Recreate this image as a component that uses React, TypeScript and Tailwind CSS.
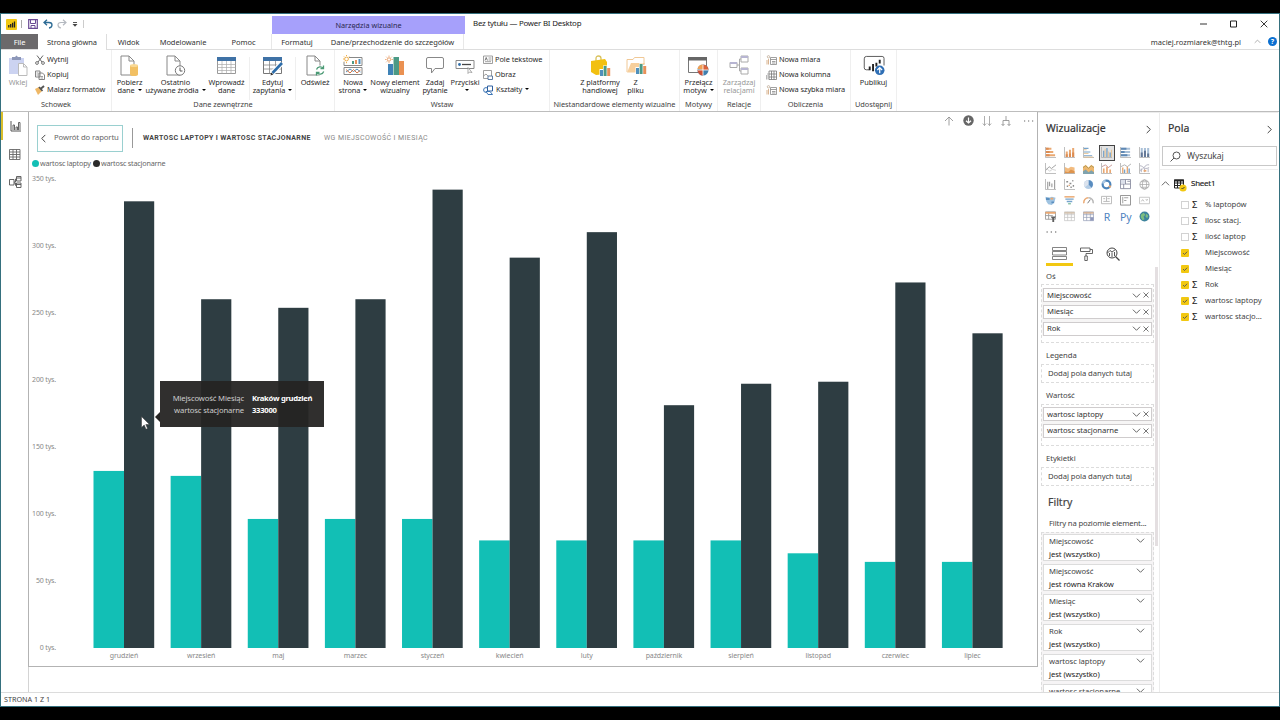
import type { ReactNode } from "react";
import clsx from "clsx";

const TEAL = "#12bfb5";
const DARK = "#2e3d42";

const months = [
  { name: "grudzień", laptops: 132, desktops: 333 },
  { name: "wrzesień", laptops: 128.3, desktops: 260 },
  { name: "maj", laptops: 96.2, desktops: 253.6 },
  { name: "marzec", laptops: 96.2, desktops: 260 },
  { name: "styczeń", laptops: 96.2, desktops: 341.7 },
  { name: "kwiecień", laptops: 80.2, desktops: 291 },
  { name: "luty", laptops: 80.2, desktops: 310 },
  { name: "październik", laptops: 80.2, desktops: 181 },
  { name: "sierpień", laptops: 80.2, desktops: 197 },
  { name: "listopad", laptops: 70.6, desktops: 198.5 },
  { name: "czerwiec", laptops: 64.2, desktops: 272.5 },
  { name: "lipiec", laptops: 64.2, desktops: 234.6 },
];

function Icon({ w = 12, h = w, box, children }: { w?: number; h?: number; box?: string; children: ReactNode }) {
  return (
    <svg width={w} height={h} viewBox={box ?? `0 0 ${w} ${h}`} fill="none" className="block shrink-0">
      {children}
    </svg>
  );
}

function Chevron({ dir = "down", w = 8, color = "#666" }: { dir?: "down" | "up" | "left" | "right"; w?: number; color?: string }) {
  const paths = { down: "M1 3l4 4 4-4", up: "M1 7l4-4 4 4", left: "M7 1L3 5l4 4", right: "M3 1l4 4-4 4" };
  return (
    <Icon w={w} box="0 0 10 10">
      <path d={paths[dir]} stroke={color} strokeWidth="1.1" />
    </Icon>
  );
}

function Caret() {
  return <span className="relative -top-px ml-[3px] inline-block border-x-2 border-t-2 border-x-transparent border-t-black align-middle" />;
}

/* ---------- ribbon icons ---------- */

const page = <path d="M2 1h8l5 5v14H2zM10 1v5h5" stroke="#888" fill="#fff" />;

const miniBars = (x: number, y: number) => (
  <g transform={`translate(${x} ${y})`}>
    <path d="M0 4h3v6H0z" fill="#4f8fbc" />
    <path d="M3.6 0h3v10h-3z" fill="#4b9a85" />
    <path d="M7.2 2h3v8h-3z" fill="#e8915a" />
  </g>
);

const icons = {
  paste: (
    <Icon w={20} h={21}>
      <path d="M1 3h15v16H1z" fill="#ccd3f1" />
      <path d="M4 2h3l1.500-1.500L10 2h3v3H4z" fill="#8d97b8" />
      <path d="M10.500 8.500h5l3.500 3.500v8.500h-8.500zM15.500 8.500V12H19" fill="#fff" stroke="#bbb" />
    </Icon>
  ),
  getData: (
    <Icon w={21} h={21}>
      {page}
      <path d="M11 10.500v9c0 2 8 2 8 0v-9z" fill="#f2c063" />
      <ellipse cx="15" cy="10.500" rx="4" ry="1.500" fill="#f9d893" />
    </Icon>
  ),
  recent: (
    <Icon w={21} h={21}>
      {page}
      <circle cx="15" cy="15.500" r="4.700" fill="#fff" stroke="#777" />
      <path d="M15 12.500v3.500h2.500" stroke="#555" />
    </Icon>
  ),
  enter: (
    <Icon w={20} h={21}>
      <path d="M.5 2.500h18v16H.5z" fill="#fff" stroke="#999" />
      <path d="M0 2h19v4H0z" fill="#3f72a6" />
      <path d="M5 6v12.500M9.500 6v12.500M14 6v12.500M.5 9.500h18M.5 12.500h18M.5 15.500h18" stroke="#aaa" strokeWidth=".7" />
    </Icon>
  ),
  edit: (
    <Icon w={20} h={21}>
      <path d="M.5 2.500h18v16H.5z" fill="#fff" stroke="#777" />
      <path d="M0 2h19v4H0z" fill="#3f72a6" />
      <path d="M6.500 6v12.500M12.500 6v12.500M.5 10h18M.5 14h18" stroke="#888" strokeWidth=".8" />
      <path d="M19 8L9 18.500" stroke="#fff" strokeWidth="5" />
      <path d="M19 8L9.500 18" stroke="#2e6da9" strokeWidth="2.600" />
      <path d="M7.500 20.500l.7-3 2.200 2z" fill="#333" />
    </Icon>
  ),
  refresh: (
    <Icon w={21} h={21}>
      {page}
      <circle cx="15" cy="15.500" r="5" fill="#fff" />
      <path d="M11.500 14.500c1-3 5-3.500 6.800-1M18.700 16.500c-1 3-5 3.500-6.800 1M18.500 10.500v3.200h-3M11.500 20.500v-3.200h3" stroke="#4b9a75" strokeWidth="1.300" />
    </Icon>
  ),
  newPage: (
    <Icon w={20} h={21}>
      <path d="M6 2.500h13v8H1V7M1 12.500h18v7H1z" stroke="#888" fill="#fff" />
      <circle cx="3.500" cy="4" r="1.900" stroke="#efb04b" fill="#fff" />
      <path d="M3.500 0v1M0 4h1M1 1.500l.8.8M6.200 1.500l-.8.8M3.500 7v1.200M1 6.600l.8-.8" stroke="#efb04b" />
      <path d="M9 6h2v3H9z" fill="#4b9a85" />
      <path d="M12 5h2v4h-2z" fill="#e8915a" />
      <path d="M15.500 4h2v5h-2z" fill="#4f8fbc" />
      <path d="M3 17l4-3 3.500 2.500L14 14l3.500 3" stroke="#4f8fbc" />
      <path d="M3 14.500l4 3.500 3.500-3.500L14 18l3.500-3" stroke="#d87643" />
    </Icon>
  ),
  newVisual: (
    <Icon w={20} h={21}>
      <path d="M3 9h5v11H3z" fill="#3f83b7" />
      <path d="M8.500 2H14v18H8.500z" fill="#4b9a85" />
      <path d="M14 6h5v14h-5z" fill="#ea9152" />
      <circle cx="4" cy="4.500" r="1.700" stroke="#e8a06a" />
      <path d="M4 .5v1.500M4 7v1.200M0 4.500h1.500M6.500 4.500H8M1.200 1.700l1 1M6.800 1.700l-1 1M1.200 7.300l1-1" stroke="#e8a06a" strokeWidth=".8" />
    </Icon>
  ),
  ask: (
    <Icon w={20} h={21}>
      <path d="M3 2.500h14q1.500 0 1.500 1.500v8q0 1.500-1.500 1.500h-7L6.500 18v-4.500H3Q1.500 13.500 1.500 12V4Q1.500 2.500 3 2.500z" stroke="#888" />
    </Icon>
  ),
  buttons: (
    <Icon w={20} h={21}>
      <path d="M1 5.500h18v8H1z" stroke="#888" />
      <circle cx="4.500" cy="9.500" r="1.400" fill="#2e6da9" />
      <path d="M7 9.500h9" stroke="#444" strokeWidth="1.300" />
      <path d="M13 12.500v6l1.500-1.500 2.500.5z" fill="#fff" stroke="#888" strokeWidth=".7" />
    </Icon>
  ),
  market: (
    <Icon w={22} h={21}>
      <path d="M7 6V3.500Q7 1 9.500 1T12 3.500V6" stroke="#d9c25c" strokeWidth="1.300" />
      <path d="M2 6l14-2 2 3v12l-11 1-5-3z" fill="#f2c010" />
      <path d="M10.500 14H14v-3.500h4V12h3.500V21h-11z" fill="#fff" />
      {miniBars(11, 11)}
    </Icon>
  ),
  file: (
    <Icon w={22} h={21}>
      <path d="M2 17V4.500h6l1.500-2H19V8" stroke="#f0c896" />
      <path d="M2 17.500L6 8h14l-3 9.500z" fill="#f6cf9d" />
      <path d="M10.500 12H14V8.500h4V10h3.500v9h-11z" fill="#fff" />
      {miniBars(11, 9)}
    </Icon>
  ),
  theme: (
    <Icon w={21} h={21}>
      <path d="M.5 2.500h18v15H.5z" fill="#fff" stroke="#777" />
      <path d="M0 2h19v3.500H0z" fill="#666" />
      <circle cx="15" cy="15" r="5.500" fill="#3f7fae" />
      <path d="M15 15V9.500a5.500 5.500 0 0 1 5.500 5.500z" fill="#d9633b" />
      <path d="M15 15l-5.500-1A5.500 5.500 0 0 1 15 9.500z" fill="#efa054" />
      <path d="M15 15v5.500A5.500 5.500 0 0 1 9.500 15z" fill="#cc5038" />
      <path d="M15 9.500v11M9.500 15h11" stroke="#fff" strokeWidth=".8" />
    </Icon>
  ),
  relations: (
    <Icon w={20} h={21}>
      <path d="M1 7.500h7v5H1zM12 1h7v6h-7zM12 13h7v6h-7zM8 10h2.500V4H12M10.500 10v6H12" stroke="#aaa" />
      <path d="M1 7h7v2H1zM12 1h7v2h-7zM12 13h7v2h-7z" fill="#b7b5d2" />
    </Icon>
  ),
  publish: (
    <Icon w={22} h={21} box="0 0 22 22">
      <path d="M6 15.500H3Q.8 15.500.8 13.500V4Q.8 1.500 3 1.500h16.500q2 0 2 2V11" stroke="#555" />
      <path d="M6.500 16v-4M10 17V9.500M13.500 12V8M17 9V5" stroke="#222" strokeWidth="2" />
      <circle cx="17" cy="16" r="5" fill="#2f6fb5" />
      <path d="M17 19v-5.500M14.500 15.700l2.500-2.500 2.500 2.500" stroke="#fff" strokeWidth="1.300" />
    </Icon>
  ),
  cut: (
    <Icon w={10}>
      <path d="M2 .5l5 6.500M8 .5L3 7" stroke="#666" />
      <circle cx="2" cy="8" r="1.400" stroke="#666" strokeWidth=".9" />
      <circle cx="8" cy="8" r="1.400" stroke="#666" strokeWidth=".9" />
    </Icon>
  ),
  copy: (
    <Icon w={10}>
      <path d="M.5 1h4.500v6H.5zM4 3h3.500L9.500 5v4.500H4z" fill="#fff" stroke="#777" strokeWidth=".9" />
      <path d="M1.500 3h2M1.500 5h2M5.500 6.500h2.500M5.500 8h2.500" stroke="#777" strokeWidth=".7" />
    </Icon>
  ),
  brush: (
    <Icon w={10}>
      <path d="M0 4l4-2 3 4-4 4z" fill="#efb866" />
      <path d="M4 2l3.500 4" stroke="#555" strokeWidth="1.600" />
      <path d="M5.500 4L9 1" stroke="#555" strokeWidth="2" />
    </Icon>
  ),
  textBox: (
    <Icon w={10}>
      <path d="M.5 1h9v7.500h-9zM5.500 3h3M5.500 5h3M2 6.700h6" stroke="#888" strokeWidth=".8" />
      <path d="M2 5.500l1.200-3 1.200 3" stroke="#555" strokeWidth=".8" />
    </Icon>
  ),
  image: (
    <Icon w={10}>
      <path d="M.5.5h8v8h-8zM.5 6l2.500-2 2 2" stroke="#888" strokeWidth=".8" />
      <path d="M5 6h4.500v3.500H5z" fill="#fff" stroke="#4f6f9a" strokeWidth=".9" />
    </Icon>
  ),
  shapes: (
    <Icon w={11} h={10}>
      <circle cx="3" cy="5" r="2.400" stroke="#3e76b5" />
      <path d="M4.500 1h5v5h-5z" fill="#fff" stroke="#2e5f9f" />
      <path d="M3 6.500h4l2.500 3H5z" fill="#fff" stroke="#3e76b5" />
    </Icon>
  ),
  measure: (
    <Icon w={11} h={10}>
      <path d="M1 5v4.500M2.500 4v5.500" stroke="#d5ab84" strokeWidth=".9" />
      <path d="M4.500 2.500h6v7h-6zM4.500 4.500h6M6 6.500h3.500M6 8h3.500" stroke="#888" strokeWidth=".8" />
      <circle cx="2.500" cy="1.800" r="1.200" stroke="#b9a48c" strokeWidth=".7" />
    </Icon>
  ),
  column: (
    <Icon w={11} h={10}>
      <path d="M3 1h7.500v8.500H3zM5.500 1v8.500M8 1v8.500M3 4h7.500M3 7h7.500" stroke="#777" strokeWidth=".8" />
      <path d="M.5 5v4.500M2 3v6.500" stroke="#999" strokeWidth=".7" />
    </Icon>
  ),
};

/* ---------- ribbon ---------- */

function BigButton({ icon, lines, width, caret, muted }: { icon: ReactNode; lines: string[]; width: string; caret?: boolean; muted?: boolean }) {
  return (
    <div className={clsx("flex shrink-0 flex-col items-center text-center leading-[8px] whitespace-nowrap", width, muted ? "text-[#999]" : "text-[#2b2b2b]")}>
      <div className="mb-[2px] h-[21px]">{icon}</div>
      {lines.map((line, i) => (
        <div key={i} className="h-2">
          {line}
          {caret && i === lines.length - 1 && <Caret />}
        </div>
      ))}
    </div>
  );
}

function SmallButton({ icon, label, caret }: { icon: ReactNode; label: string; caret?: boolean }) {
  return (
    <div className="flex h-[15px] items-center gap-[2px] whitespace-nowrap">
      {icon}
      <span>
        {label}
        {caret && <Caret />}
      </span>
    </div>
  );
}

function Group({ label, width, children }: { label: string; width: string; children: ReactNode }) {
  return (
    <div className={clsx("flex h-[61px] shrink-0 flex-col border-r border-[#efefef]", width)}>
      <div className="flex h-[49px] pt-[5px]">{children}</div>
      <div className="flex justify-center leading-[11px] whitespace-nowrap text-[#444]">{label}</div>
    </div>
  );
}

function Ribbon() {
  return (
    <div className="flex h-[62px] border-b border-[#bdbdbd] text-[7.4px] tracking-[-0.06px] text-[#2b2b2b]">
      <Group label="Schowek" width="w-[111px]">
        <BigButton icon={icons.paste} lines={["Wklej"]} width="w-[34px]" muted />
        <div className="-mt-[3px]">
          <SmallButton icon={icons.cut} label="Wytnij" />
          <SmallButton icon={icons.copy} label="Kopiuj" />
          <SmallButton icon={icons.brush} label="Malarz formatów" />
        </div>
      </Group>
      <Group label="Dane zewnętrzne" width="w-[223px]">
        <BigButton icon={icons.getData} lines={["Pobierz", "dane"]} width="w-[35px]" caret />
        <BigButton icon={icons.recent} lines={["Ostatnio", "używane źródła"]} width="w-[57px]" caret />
        <BigButton icon={icons.enter} lines={["Wprowadź", "dane"]} width="w-[45px]" />
        <div className="mt-[2px] -mb-px border-x border-[#efefef]">
          <div className="-mt-[2px]">
            <BigButton icon={icons.edit} lines={["Edytuj", "zapytania"]} width="w-[45px]" caret />
          </div>
        </div>
        <BigButton icon={icons.refresh} lines={["Odśwież"]} width="w-[38px]" />
      </Group>
      <Group label="Wstaw" width="w-[215px]">
        <BigButton icon={icons.newPage} lines={["Nowa", "strona"]} width="w-[36px]" caret />
        <BigButton icon={icons.newVisual} lines={["Nowy element", "wizualny"]} width="w-[48px]" />
        <BigButton icon={icons.ask} lines={["Zadaj", "pytanie"]} width="w-[32px]" />
        <BigButton icon={icons.buttons} lines={["Przyciski", ""]} width="w-[28px]" caret />
        <div className="-mt-[3px] ml-1">
          <SmallButton icon={icons.textBox} label="Pole tekstowe" />
          <SmallButton icon={icons.image} label="Obraz" />
          <SmallButton icon={icons.shapes} label="Kształty" caret />
        </div>
      </Group>
      <Group label="Niestandardowe elementy wizualne" width="w-[130px]">
        <div className="ml-[26px] flex">
          <BigButton icon={icons.market} lines={["Z platformy", "handlowej"]} width="w-[48px]" />
          <BigButton icon={icons.file} lines={["Z", "pliku"]} width="w-[23px]" />
        </div>
      </Group>
      <Group label="Motywy" width="w-[38px]">
        <BigButton icon={icons.theme} lines={["Przełącz", "motyw"]} width="w-[37px]" caret />
      </Group>
      <Group label="Relacje" width="w-[43px]">
        <BigButton icon={icons.relations} lines={["Zarządzaj", "relacjami"]} width="w-[42px]" muted />
      </Group>
      <Group label="Obliczenia" width="w-[90px]">
        <div className="-mt-[3px] ml-[5px]">
          <SmallButton icon={icons.measure} label="Nowa miara" />
          <SmallButton icon={icons.column} label="Nowa kolumna" />
          <SmallButton icon={icons.measure} label="Nowa szybka miara" />
        </div>
      </Group>
      <Group label="Udostępnij" width="w-[46px]">
        <BigButton icon={icons.publish} lines={["Publikuj"]} width="w-[45px]" />
      </Group>
    </div>
  );
}

function TitleBar() {
  return (
    <div className="flex h-5 items-center">
      <div className="flex w-[271px] items-center pl-[5px]">
        <Icon w={11}>
          <rect width="11" height="11" rx="1" fill="#f2c811" />
          <path d="M2.800 8.500V6M4.700 8.500V5M6.600 8.500V3.700M8.500 8.500V2.500" stroke="#222" strokeWidth="1.300" />
        </Icon>
        <div className="ml-1 h-2 w-px bg-[#aaa]" />
        <div className="ml-[6px]">
          <Icon w={10}>
            <path d="M.7.700h8.600v8.600H.7z" stroke="#6a4a94" strokeWidth="1.200" />
            <path d="M2.500 1v3.500h5V1M3 9V6.500h4V9" stroke="#6a4a94" />
          </Icon>
        </div>
        <div className="ml-[5px]">
          <Icon w={10}>
            <path d="M4 .8L1 3.500l3 2.700M1 3.500h5q3 0 3 2.500T6 9" stroke="#2b6a94" strokeWidth="1.300" />
          </Icon>
        </div>
        <div className="ml-1">
          <Icon w={10}>
            <path d="M6 .8l3 2.700-3 2.700M9 3.500H4q-3 0-3 2.500T4 9" stroke="#b4b9c0" strokeWidth="1.200" />
          </Icon>
        </div>
        <div className="ml-[5px]">
          <Icon w={6} h={6}>
            <path d="M1 1.500h4" stroke="#555" />
            <path d="M.5 3h5L3 5.800z" fill="#444" />
          </Icon>
        </div>
        <div className="ml-[5px] h-2 w-px bg-[#ccc]" />
      </div>
      <div className="mt-[2px] flex h-[18px] w-[193px] items-center justify-center bg-[#a6a0fb] text-[7.300px] text-[#2b2850]">Narzędzia wizualne</div>
      <div className="ml-2 text-[7.900px] tracking-[-0.220px] text-[#222]">Bez tytułu — Power BI Desktop</div>
      <div className="ml-auto flex items-center gap-[23px] pr-[11px]">
        <Icon w={7} h={8}><path d="M0 4h7" stroke="#333" /></Icon>
        <Icon w={7} h={8}><path d="M.5 1h6v6h-6z" stroke="#222" /></Icon>
        <Icon w={8}><path d="M.7.700l6.600 6.600M7.300.7L.7 7.300" stroke="#222" strokeWidth=".9" /></Icon>
      </div>
    </div>
  );
}

function MenuTabs() {
  return (
    <div className="flex h-4 items-stretch border-b border-[#ddd] text-[7.500px] leading-[16px] tracking-[-0.070px] text-[#333]">
      <div className="w-[37px] bg-[#6b696b] text-center text-white">File</div>
      <div className="h-4 w-[69px] border-r border-[#ddd] bg-white text-center">Strona główna</div>
      <div className="w-[43px] text-center">Widok</div>
      <div className="w-[66px] text-center">Modelowanie</div>
      <div className="w-[55px] text-center">Pomoc</div>
      <div className="w-[51px] border-l border-[#e8e8e8] text-center">Formatuj</div>
      <div className="w-[142px] border-r border-[#e8e8e8] text-center whitespace-nowrap">Dane/przechodzenie do szczegółów</div>
      <div className="ml-auto flex items-center">
        <span className="mr-[13px] tracking-normal">maciej.rozmiarek@thtg.pl</span>
        <Chevron dir="up" w={7} color="#999" />
        <span className="mr-[2px] ml-[7px] flex size-[9px] items-center justify-center rounded-full bg-[#0b6fd0] text-[7px] leading-none font-bold text-white">?</span>
      </div>
    </div>
  );
}

/* ---------- report canvas ---------- */

function ViewRail() {
  return (
    <div className="flex w-[28px] shrink-0 flex-col border-r border-[#d4d4d4]">
      <div className="flex h-7 items-center border-l-2 border-[#d8be2c] pl-[7px]">
        <Icon w={11}>
          <path d="M1 0v10h10" stroke="#555" />
          <path d="M3 9V4h1.500v5M6 9V6h1.500v3M8.500 9V1.500H10V9" stroke="#555" strokeWidth=".9" />
        </Icon>
      </div>
      <div className="flex h-7 items-center pl-2">
        <Icon w={12} h={11}>
          <path d="M.5.5h10.500v10H.5zM.5 3h10.500M.5 5.500h10.500M.5 8h10.500M4 .5v10M7.500.5v10" stroke="#666" strokeWidth=".9" />
        </Icon>
      </div>
      <div className="flex h-7 items-center pl-2">
        <Icon w={13} h={12}>
          <path d="M.5 3.500h4.500V9H.5zM7.500.5H12V5H7.500zM7.500 7H12v4.500H7.500zM5 6h1.500V3h1M5 7h1.500v2.500h1M7.500 2H12M7.500 8.500H12" stroke="#555" strokeWidth=".9" />
        </Icon>
      </div>
    </div>
  );
}

function ColumnChart() {
  const base = 476;
  const scale = 469.5 / 350;
  return (
    <svg width="1008" height="494" viewBox="0 0 1008 494" className="block" fontSize="7" fill="#888">
      {[350, 300, 250, 200, 150, 100, 50, 0].map((v) => (
        <text key={v} x="27" y={base - v * scale + 2.3} textAnchor="end" letterSpacing="-0.15">
          {v} tys.
        </text>
      ))}
      {months.map((m, i) => {
        const x = 64.5 + i * 77.13;
        return (
          <g key={m.name}>
            <rect x={x} y={base - m.laptops * scale} width="30.500" height={m.laptops * scale} fill={TEAL} />
            <rect x={x + 30.5} y={base - m.desktops * scale} width="30.200" height={m.desktops * scale} fill={DARK} />
            <text x={x + 30.5} y="486" textAnchor="middle" letterSpacing="-0.1">
              {m.name}
            </text>
          </g>
        );
      })}
    </svg>
  );
}

function ChartTooltip() {
  return (
    <div className="absolute top-[269px] left-[131px] flex h-[46px] w-[164px] items-center gap-2 bg-[#252423]/95 text-[7.700px] leading-[12px] tracking-[-0.150px]">
      <div className="absolute top-[31px] -left-[5px] border-y-[5px] border-r-[5px] border-y-transparent border-r-[#252423]" />
      <div className="w-[84px] text-right whitespace-nowrap text-[#ccc]">
        <div>Miejscowość Miesiąc</div>
        <div>wartosc stacjonarne</div>
      </div>
      <div className="font-bold tracking-[-0.3px] whitespace-nowrap text-white">
        <div>Kraków grudzień</div>
        <div>333000</div>
      </div>
    </div>
  );
}

function ReportCanvas() {
  return (
    <div className="relative h-[556px] w-[1010px] border border-[#b3b3b3] bg-white">
      <div className="flex h-[43px] items-center pt-[9px]">
        <div className="ml-2 flex h-[27px] w-[86px] shrink-0 items-center gap-[6px] border border-[#9ad0d0] pl-px text-[7.700px] tracking-[-0.1px] whitespace-nowrap text-[#666]">
          <Chevron dir="left" w={9} color="#444" />
          Powrót do raportu
        </div>
        <div className="ml-[9px] h-5 w-px bg-[#999]" />
        <div className="ml-[10px] w-[181px] font-[Roboto] text-[7px] font-bold tracking-[0.340px] whitespace-nowrap text-[#444]">WARTOSC LAPTOPY I WARTOSC STACJONARNE</div>
        <div className="font-[Roboto] text-[7px] tracking-[0.400px] whitespace-nowrap text-[#888]">WG MIEJSCOWOŚĆ I MIESIĄC</div>
        <div className="-mt-[6px] mr-[3px] ml-auto flex items-center gap-[8.500px] self-start">
          <Icon w={10}><path d="M5 9.500V1M1 5l4-4 4 4" stroke="#888" strokeWidth=".8" /></Icon>
          <Icon w={11}>
            <circle cx="5.500" cy="5.500" r="5.200" fill="#666" />
            <path d="M5.500 2.500v5.500M3 5.700L5.500 8 8 5.700" stroke="#fff" strokeWidth="1.200" />
          </Icon>
          <Icon w={10}><path d="M2.500 0v9.500M7.500 0v9.500M.8 7.500l1.700 2 1.700-2M5.800 7.500l1.700 2 1.700-2" stroke="#999" strokeWidth=".8" /></Icon>
          <Icon w={10}><path d="M5 0v4.500M2 9.500v-5h6v5M.5 8L2 9.500 3.500 8M6.500 8L8 9.500 9.500 8" stroke="#888" strokeWidth=".8" /></Icon>
          <span className="ml-[4px]"><Icon w={11} h={8}><path d="M1 4h1.200M5 4h1.200M9 4h1.200" stroke="#666" strokeWidth="1.200" /></Icon></span>
        </div>
      </div>
      <div className="flex h-[17px] items-center pl-[3px] text-[7.200px] tracking-[-0.190px] whitespace-nowrap text-[#666]">
        <span className="mr-[1px] size-[7px] rounded-full bg-[#12bfb5]" />
        <span className="w-[53px]">wartosc laptopy</span>
        <span className="mr-[1px] size-[7px] rounded-full bg-[#2b2b2b]" />
        wartosc stacjonarne
      </div>
      <ColumnChart />
      <ChartTooltip />
      <svg width="9" height="14" viewBox="0 0 9 14" className="absolute top-[304px] left-[112px]">
        <path d="M.5.500v11l2.700-2.500 1.800 4.300 1.600-.7-1.800-4.100h3.700z" fill="#fff" stroke="#333" strokeWidth=".5" />
      </svg>
    </div>
  );
}

/* ---------- visualizations pane ---------- */

const O = "#e79a5a";
const B = "#5d93c4";
const G = "#8a8a8a";

const axes = <path d="M.5 0v11.500H12" stroke="#aaa" />;

const visuals: ReactNode[] = [
  <>{axes}<path d="M1 2h6M1 5.500h8M1 9h10" stroke={O} strokeWidth="2.200" /><path d="M1 2h3M1 5.500h4M1 9h4" stroke="#d87935" strokeWidth="2.200" /></>,
  <>{axes}<path d="M3 11V5M6.500 11V3M10 11V1" stroke={O} strokeWidth="2.200" /><path d="M3 11V8M6.500 11V7M10 11V6" stroke="#d87935" strokeWidth="2.200" /></>,
  <>{axes}<path d="M1 1.500h5M1 5.500h7M1 9.500h9" stroke={B} strokeWidth="1.100" /><path d="M1 3h3M1 7h5M1 11h10" stroke="#e0b77f" /></>,
  <>{axes}<path d="M3 11V4M6.500 11V1M10 11V6" stroke={B} strokeWidth="1.400" /><path d="M4.500 11V2M8 11V5M11.500 11V3" stroke="#e7c08c" strokeWidth="1.200" /></>,
  <>{axes}<path d="M1 2h10M1 5.500h10M1 9h10" stroke="#9bb6d2" strokeWidth="2.200" /><path d="M1 2h6M1 5.500h4M1 9h7" stroke="#4474a8" strokeWidth="2.200" /></>,
  <>{axes}<path d="M3 11V1M6.500 11V1M10 11V1" stroke="#9bb6d2" strokeWidth="2.200" /><path d="M3 11V6M6.500 11V4M10 11V7" stroke="#4a6185" strokeWidth="2.200" /></>,
  <>{axes}<path d="M1 8l3.500-4L7 6l5-4" stroke={G} /><path d="M1 5l4 4 3-2 4 1" stroke="#bbb" strokeWidth=".8" /></>,
  <><path d="M.5 12V4l4 2 3-2 4 1v7z" fill="#f0b069" /><path d="M.5 12V9l4 1 3-3 4 2v3z" fill="#d9822f" />{axes}</>,
  <><path d="M0 12V4l3-2 3 3 3-3 3 2v8z" fill="#ecab55" /><path d="M0 12V9l3-2 3 3 3-2 3 2v2z" fill="#6a93a0" /><path d="M0 5l3-2 3 3 3-3 3 2" stroke="#a48a3a" /></>,
  <>{axes}<path d="M3 11V6M6.500 11V4M10 11V7" stroke={O} strokeWidth="1.800" /><path d="M1 4l4-2 3 3 4-3" stroke="#a66" strokeWidth=".8" /></>,
  <>{axes}<path d="M3 11V5M8 11V4" stroke={O} strokeWidth="1.500" /><path d="M5 11V7M10 11V6" stroke={B} strokeWidth="1.500" /><path d="M1 4l4-2 3 2 4-3" stroke={G} strokeWidth=".8" /></>,
  <>{axes}<path d="M1 3c4 0 4 5 10 2M1 8c4 0 5-7 10-6M2.500 10V6M6 10V6M10 10V6" stroke="#a3a3b5" /><path d="M5 8.500h3" stroke={O} strokeWidth="2" /></>,
  <>{axes}<path d="M3 11V3M5 8V3M7.500 9V5M10.500 11V1" stroke="#888" strokeWidth="1.200" /></>,
  <>{axes}<path d="M2.500 3h2M6 5h2M3 8h1.500M7 9h1.500M9.500 7.500H11M9 2h1.200" stroke="#777" strokeWidth="1.700" /><path d="M5 7h1.500" stroke={O} strokeWidth="1.500" /></>,
  <><circle cx="6" cy="6" r="5" fill="#a8c5e2" /><path d="M6 6V1a5 5 0 0 1 3.500 8.500z" fill="#3d78b5" /><path d="M6 6L2 9A5 5 0 0 1 6 1z" fill="#d6dfeb" /></>,
  <><circle cx="6" cy="6" r="4.200" stroke="#2e6fae" strokeWidth="2.400" /><path d="M2 5a4.200 4.200 0 0 1 3-3" stroke="#9fc0e0" strokeWidth="2.400" /><path d="M9 9a4.200 4.200 0 0 0 1-2" stroke={O} strokeWidth="2.400" /></>,
  <><path d="M.5.5h11v10H.5zM.5 5.500h11M6 .5v5M4 5.500v5M8 2.500h3" stroke="#777b92" /><path d="M1 1h4.500v4H1z" fill="#d8dce8" /></>,
  <><circle cx="6" cy="6" r="5" stroke={G} strokeWidth=".8" /><ellipse cx="6" cy="6" rx="2.300" ry="5" stroke={G} strokeWidth=".7" /><path d="M1 6h10M2 3h8M2 9h8" stroke={G} strokeWidth=".7" /></>,
  <><path d="M.5 2l4 1 3-1 4 1-1 4-3 4-4-1-2-3z" fill="#8fb9dc" /><path d="M1 3h4v2.500H1zM7 7h3v2H7z" fill="#3f7cb5" /><path d="M6 3h3v2H6z" fill={O} /></>,
  <><path d="M.5 2h11" stroke={O} strokeWidth="1.600" /><path d="M1.500 4.500h9M3 7h6" stroke={B} strokeWidth="1.600" /><path d="M4.500 9.500h3" stroke="#7b9" strokeWidth="1.600" /></>,
  <><path d="M1 9a5 5 0 0 1 5-6" stroke={O} strokeWidth="1.600" /><path d="M6 3a5 5 0 0 1 5 6" stroke="#aaa" strokeWidth="1.600" /><path d="M5 9l3-4" stroke="#555" /></>,
  <><path d="M.5 1.500h11v8H.5z" stroke="#aaa" /><path d="M2.500 4h2M2.500 7h7M7 4h2.500M6 2v5" stroke="#aaa" /></>,
  <><path d="M.5.5h11v10.500H.5z" stroke="#777" /><path d="M3 2v7M4.500 3H9M4.500 6H7" stroke="#888" /></>,
  <><path d="M.5 2.500h11v7H.5z" stroke="#bbb" /><path d="M2.500 7l1.500-2 1.500 2M7.500 4.500l1 1.500 1-1.500" stroke="#999" strokeWidth=".8" /></>,
  <><path d="M.5 1h11v8H.5zM4 1v8M.5 5h8" stroke={G} /><path d="M.5 1h11v2H.5z" fill={O} /><path d="M6 6h6l-2 2.500V12H8V8.500z" fill="#444" /></>,
  <><path d="M.5 1h11v9.500H.5zM4 1v9.500M8 1v9.500M.5 4h11M.5 7h11" stroke="#bbb" strokeWidth=".8" /><path d="M.5 1h11v2H.5z" fill="#cbb9a5" /></>,
  <><path d="M.5 1h11v9.500H.5zM4 1v9.500M8 1v9.500M.5 4h11M.5 7h11" stroke="#8791ad" strokeWidth=".8" /><path d="M.5 1h11v2H.5z" fill="#c9a68a" /><path d="M8 7h3.500v3.500H8z" fill="#7c86b0" /></>,
  null,
  null,
  <><circle cx="6" cy="6" r="5.400" fill="#1c6e8c" /><path d="M2 4l3-2 2 2-2 2 1 3-2 1-2-3zM8 3l2 2-1 3-2-2z" fill="#66b36b" /></>,
];

// script visuals are shown as lettering instead of a glyph
const lettering: Record<number, string> = { 27: "R", 28: "Py" };

function FieldPill({ label }: { label: string }) {
  return (
    <div className="mb-[3px] flex h-[13.700px] items-center border border-[#cfcccd] bg-white pl-[3px] text-[#333]">
      <span className="flex-1 whitespace-nowrap">{label}</span>
      <Chevron w={9} />
      <span className="mr-[2px] ml-[2px]">
        <Icon w={6}><path d="M.5.5l5 5M5.500.5l-5 5" stroke="#555" strokeWidth=".8" /></Icon>
      </span>
    </div>
  );
}

function Well({ title, fields, className }: { title: string; fields: string[]; className: string }) {
  return (
    <>
      <div className="ml-[8px] h-3 leading-3">{title}</div>
      <div className={clsx("ml-[3px] w-[113px] shrink-0 border border-dashed border-[#dcdcdc]", className)}>
        {fields.length ? (
          <div className="bg-[#f6f5f5] px-px">{fields.map((f) => <FieldPill key={f} label={f} />)}</div>
        ) : (
          <div className="pl-[6px] leading-[17px] whitespace-nowrap">Dodaj pola danych tutaj</div>
        )}
      </div>
    </>
  );
}

const filters = [
  ["Miejscowość", "jest (wszystko)"],
  ["Miejscowość", "jest równa Kraków"],
  ["Miesiąc", "jest (wszystko)"],
  ["Rok", "jest (wszystko)"],
  ["wartosc laptopy", "jest (wszystko)"],
  ["wartosc stacjonarne"],
];

function VisualizationsPane() {
  return (
    <div className="flex h-[580px] w-[122px] shrink-0 overflow-hidden border-t border-r border-[#ececec] text-[7.700px] tracking-[-0.080px] text-[#444]">
      <div className="flex w-[117px] shrink-0 flex-col">
        <div className="flex h-[32px] shrink-0 items-center pl-[8px] text-[10.500px] tracking-normal text-[#333]">
          <span className="w-[98px] [-webkit-text-stroke:0.2px]">Wizualizacje</span>
          <Chevron dir="right" w={9} color="#444" />
        </div>
        <div className="ml-[3px] grid w-[113px] shrink-0 grid-cols-6">
          {visuals.map((v, i) => (
            <div key={i} className="flex h-[15.900px] items-center justify-center">
              <div className={clsx("flex size-[14px] items-center justify-center", i === 3 && "bg-[#e2e2e2] outline outline-[#444]")}>
                {lettering[i] ? (
                  <span className="text-[10.500px] leading-[14px] text-[#4f83c0]">{lettering[i]}</span>
                ) : (
                  <span className="opacity-85"><Icon w={11} box="0 0 12 12">{v}</Icon></span>
                )}
              </div>
            </div>
          ))}
        </div>
        <div className="ml-[8px] flex h-[15px] shrink-0 items-center">
          <Icon w={11} h={4}><path d="M.5 2h1.300M4.700 2H6M9 2h1.300" stroke="#555" strokeWidth="1.200" /></Icon>
        </div>
        <div className="ml-[8px] flex h-[27px] shrink-0">
          <div className="flex w-[27px] items-center justify-center border-b-[3px] border-[#f2c811] pt-[5px]">
            <Icon w={15} h={13}><path d="M.5.500h14v3H.5zM.5 4.500h14v3.500H.5zM.5 9.500h14v3H.5z" stroke="#666" strokeWidth=".8" /></Icon>
          </div>
          <div className="flex w-[27px] items-center justify-center pt-[3px]">
            <Icon w={13} h={14}><path d="M.5 1h9.500v3.500H.5zM10 2.500h2.500v4H6V9M4.800 9h2.500v4.500H4.800z" stroke="#555" strokeWidth=".9" /></Icon>
          </div>
          <div className="flex w-[26px] items-center justify-center pt-[3px]">
            <Icon w={14}>
              <circle cx="6" cy="6" r="5" stroke="#444" />
              <path d="M9.500 9.500l4 4" stroke="#444" strokeWidth="1.300" />
              <path d="M3.500 9V6M6 10V5.500M8.500 9V5M1.500 6L4 3.500l2 1.500 3.500-2.500" stroke="#444" strokeWidth=".9" />
            </Icon>
          </div>
        </div>
        <div className="h-[4px] shrink-0" />
        <Well title="Oś" fields={["Miejscowość", "Miesiąc", "Rok"]} className="mt-[2px] mb-[6px] h-[59px] pt-[3px]" />
        <Well title="Legenda" fields={[]} className="mt-[3px] mb-[6px] h-[19px]" />
        <Well title="Wartość" fields={["wartosc laptopy", "wartosc stacjonarne"]} className="mt-[3px] mb-[6px] h-[42px] pt-[2px]" />
        <Well title="Etykietki" fields={[]} className="mt-[3px] h-[19px]" />
        <div className="mt-[8px] ml-[10px] h-4 text-[10.500px] leading-4 tracking-normal [-webkit-text-stroke:0.2px]">Filtry</div>
        <div className="mt-[7px] mb-[3px] ml-[11px] h-3 leading-3 tracking-[-0.150px] whitespace-nowrap">Filtry na poziomie element...</div>
        <div className="ml-[3px] w-[113px] shrink-0 border border-dashed border-[#ddd] bg-[#f6f4f5] px-px pt-px">
          {filters.map(([name, rule], i) => (
            <div key={i} className="mb-[3px] flex h-[27px] items-start justify-between border border-[#dcdcdc] bg-white pr-[6px] pl-[5px] leading-[12.700px]">
              <div className="whitespace-nowrap">
                <div>{name}</div>
                {rule && <div className="text-[#222]">{rule}</div>}
              </div>
              <div className="mt-[1px]"><Chevron w={9} /></div>
            </div>
          ))}
        </div>
      </div>
      <div className="mt-[154px] h-[279px] w-[3px] bg-[#e4dfe1]" />
    </div>
  );
}

/* ---------- fields pane ---------- */

const fields = [
  { name: "% laptopów", checked: false, sum: true },
  { name: "ilosc stacj.", checked: false, sum: true },
  { name: "ilość laptop", checked: false, sum: true },
  { name: "Miejscowość", checked: true, sum: false },
  { name: "Miesiąc", checked: true, sum: false },
  { name: "Rok", checked: true, sum: true },
  { name: "wartosc laptopy", checked: true, sum: true },
  { name: "wartosc stacjo...", checked: true, sum: true },
];

function FieldsPane() {
  return (
    <div className="w-[118px] shrink-0 border-t border-[#ececec] text-[7.700px] text-[#444]">
      <div className="flex h-[32px] items-center pl-[8px] text-[10.500px] text-[#333]">
        <span className="w-[97px] [-webkit-text-stroke:0.2px]">Pola</span>
        <Chevron dir="right" w={9} color="#444" />
      </div>
      <div className="mt-px ml-[2px] flex h-[20px] w-[115px] items-center gap-[6px] border border-[#c8c8c8] pl-[7px] text-[8.600px] tracking-[-0.1px]">
        <Icon w={11}>
          <circle cx="6.500" cy="4.500" r="3.500" stroke="#555" />
          <path d="M4 7L.5 10.500" stroke="#555" />
        </Icon>
        Wyszukaj
      </div>
      <div className="mt-[3px] flex h-[28px] items-center border-t border-[#eee] pl-[1px] text-[7.900px] tracking-[-0.2px] text-[#222]">
        <Chevron dir="up" w={9} />
        <div className="mt-[4px] mr-[3px] ml-[4px]">
          <Icon w={14} h={13}>
            <path d="M.5 1h9v8h-9zM.5 4h9M.5 6.500h9M3.500 1v8M6.500 1v8" stroke="#222" />
            <path d="M0 .5h10v2H0z" fill="#222" />
            <circle cx="9" cy="9" r="3.600" fill="#f2c811" />
            <path d="M7.500 9l1 1 2-2" stroke="#333" strokeWidth=".9" />
          </Icon>
        </div>
        <span className="[-webkit-text-stroke:0.150px]">Sheet1</span>
      </div>
      {fields.map((f) => (
        <div key={f.name} className="flex h-4 items-center pl-[21px]">
          {f.checked ? (
            <Icon w={8}>
              <rect width="8" height="8" rx="1" fill="#f2c811" />
              <path d="M2 4l1.500 1.500L6.200 2.700" stroke="#555" strokeWidth=".9" />
            </Icon>
          ) : (
            <span className="size-2 border border-[#d2d2d2]" />
          )}
          <span className="ml-[3px] w-[13px] text-[9.500px] text-[#222]">{f.sum && "Σ"}</span>
          <span className="tracking-[-0.050px] whitespace-nowrap">{f.name}</span>
        </div>
      ))}
    </div>
  );
}

export default function App() {
  return (
    <div className="h-[720px] w-[1280px] overflow-hidden bg-black pt-[13px] font-['Noto_Sans','Open_Sans',sans-serif]">
      <div className="flex h-[694px] flex-col border border-[#35707e] bg-white">
        <TitleBar />
        <MenuTabs />
        <Ribbon />
        <div className="flex h-[580px] shrink-0 overflow-hidden">
          <ViewRail />
          <div className="-mt-px -ml-px w-[1010px] shrink-0">
            <ReportCanvas />
          </div>
          <VisualizationsPane />
          <FieldsPane />
        </div>
        <div className="flex h-[14px] items-center border-t border-[#dcdcdc] pl-[3px] text-[7.200px] text-[#444]">STRONA 1 Z 1</div>
      </div>
    </div>
  );
}
